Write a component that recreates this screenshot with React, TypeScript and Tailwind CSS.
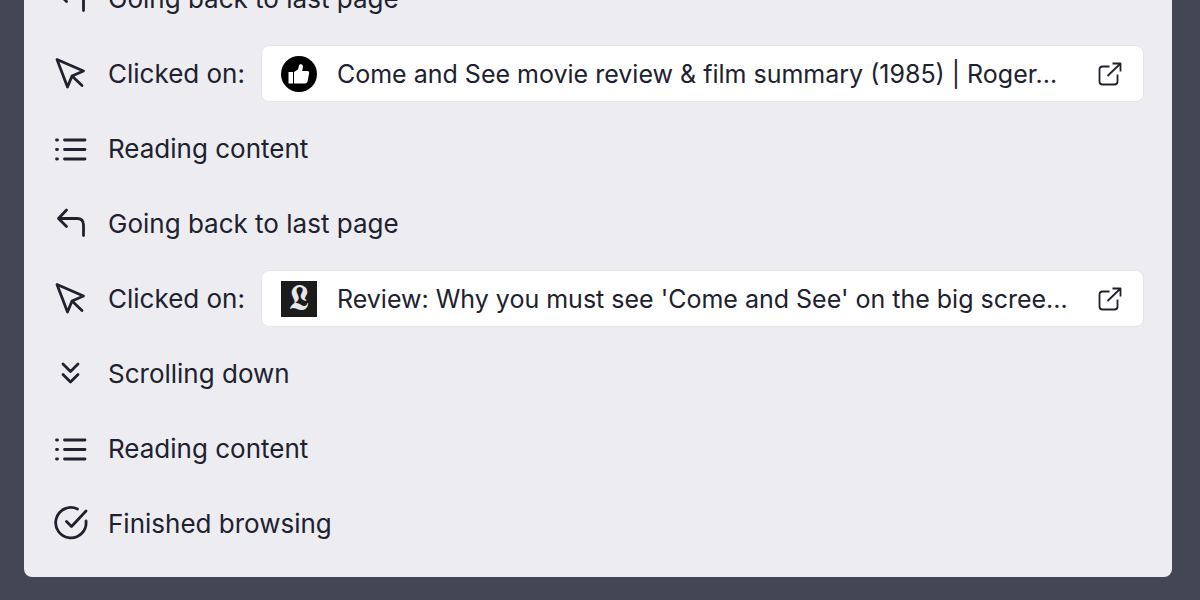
import type { ReactNode } from "react"

type Site = "thumb" | "latimes"

type Step = {
  icon: "back" | "cursor" | "list" | "scroll" | "done"
  label: string
  link?: { title: string; site: Site }
}

const steps: Step[] = [
  { icon: "back", label: "Going back to last page" },
  { icon: "cursor", label: "Clicked on:", link: { title: "Come and See movie review & film summary (1985) | Roger...", site: "thumb" } },
  { icon: "list", label: "Reading content" },
  { icon: "back", label: "Going back to last page" },
  { icon: "cursor", label: "Clicked on:", link: { title: "Review: Why you must see 'Come and See' on the big scree...", site: "latimes" } },
  { icon: "scroll", label: "Scrolling down" },
  { icon: "list", label: "Reading content" },
  { icon: "done", label: "Finished browsing" },
]

const icons: Record<Step["icon"], ReactNode> = {
  back: <path d="M14.500 4 6.500 12.500l8 8M6.500 12.500H25q6.500 0 6.500 6.500V29.500" />,
  cursor: <path d="M5 3.500 31.500 15 20 20 15.500 31ZM20 20 30 29.500" />,
  list: (
    <>
      <path d="M12.500 9h20.500M12.500 18.500h20.500M12.500 28h20.500" />
      <path d="M4.500 9h1M4.500 18.500h1M4.500 28h1" />
    </>
  ),
  scroll: <path d="m11 8 7.500 7.500L26 8M11 18.500l7.500 7.500 7.500-7.500" />,
  done: <path d="M25.500 3A15.200 15.200 0 1 0 34 15M14.500 15.500l5 5L34 5" />,
}

function Favicon({ site }: { site: Site }) {
  if (site === "thumb") {
    return (
      <svg viewBox="0 0 36 36" className="size-9 shrink-0" aria-hidden="true">
        <circle cx="18" cy="18" r="18" />
        <path fill="#fff" d="M7.500 16h4.500v11.500H7.500ZM13 16l4-2.500 1-4q.5-1.500 2-1.500 2 .5 2 3l-.8 4h5.500q1.800.3 1.500 2l-1.700 8.500q-.5 2-2.500 2H13Z" />
      </svg>
    )
  }
  return (
    <span className="flex size-9 shrink-0 items-center justify-center bg-[#1b1b1b] font-serif text-4xl leading-none text-gray-200" aria-hidden="true">𝕷</span>
  )
}

function PageLink({ title, site }: { title: string; site: Site }) {
  return (
    <a href="#" className="flex h-[57px] min-w-0 flex-1 items-center gap-5 rounded-lg border border-[#e4e4e9] bg-white px-[19px]">
      <Favicon site={site} />
      <span className="min-w-0 flex-1 overflow-hidden text-[25px] whitespace-nowrap">{title}</span>
      <svg viewBox="0 0 26 26" className="size-[26px] shrink-0" fill="none" stroke="currentColor" strokeWidth="1.8" strokeLinejoin="round" aria-hidden="true">
        <path d="M11.500 5.500H4.500Q1.500 5.500 1.500 8.500v12q0 3 3 3h12q3 0 3-3v-7M9.500 15 22.500 2.500M14.500 2.500h8v8" />
      </svg>
    </a>
  )
}

export default function App() {
  return (
    <main className="flex h-screen flex-col justify-end overflow-hidden bg-[#444654] pr-7 pb-[23px] pl-6 font-['Inter','Liberation_Sans',sans-serif] text-[26px] leading-9 text-[#20212e]">
      <ul className="flex flex-col gap-[18px] rounded-lg bg-[#ececf1] px-7 pt-6 pb-[25px]">
        {steps.map((step, i) => (
          <li key={i} className="flex h-[57px] items-center gap-5">
            <svg viewBox="0 0 36 36" className="size-9 shrink-0" fill="none" stroke="currentColor" strokeWidth="2.8" strokeLinecap="round" strokeLinejoin="round" aria-hidden="true">
              {icons[step.icon]}
            </svg>
            <div className="flex min-w-0 flex-1 items-center gap-4">
              <span className="shrink-0">{step.label}</span>
              {step.link && <PageLink title={step.link.title} site={step.link.site} />}
            </div>
          </li>
        ))}
      </ul>
    </main>
  )
}
